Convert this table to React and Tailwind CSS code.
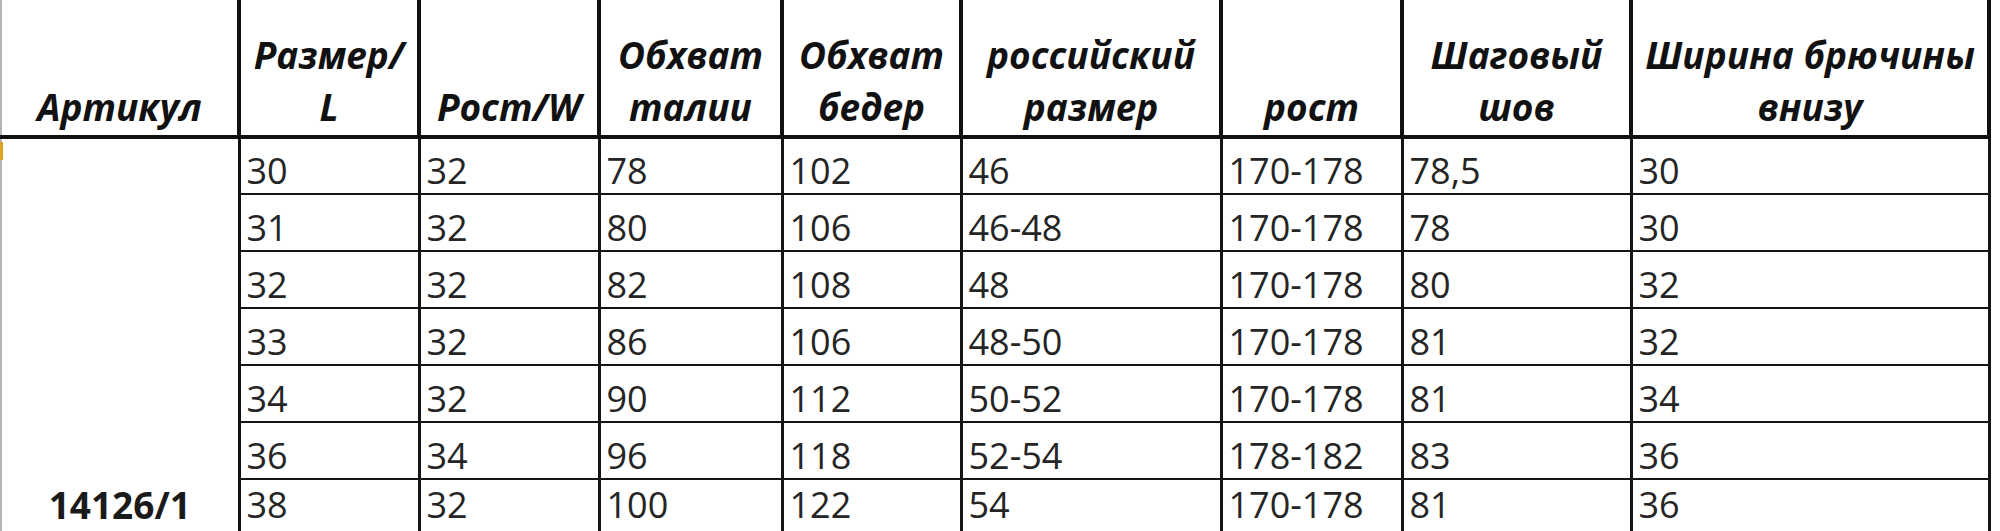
const cols = [
  "w-[238px]",
  "w-[180px]",
  "w-[180px]",
  "w-[183px]",
  "w-[179px]",
  "w-[260px]",
  "w-[181px]",
  "w-[229px]",
  "w-[358px]",
];

const headers = [
  ["Размер/", "L"],
  ["Рост/W"],
  ["Обхват", "талии"],
  ["Обхват", "бедер"],
  ["российский", "размер"],
  ["рост"],
  ["Шаговый", "шов"],
  ["Ширина брючины", "внизу"],
];

const rows = [
  ["30", "32", "78", "102", "46", "170-178", "78,5", "30"],
  ["31", "32", "80", "106", "46-48", "170-178", "78", "30"],
  ["32", "32", "82", "108", "48", "170-178", "80", "32"],
  ["33", "32", "86", "106", "48-50", "170-178", "81", "32"],
  ["34", "32", "90", "112", "50-52", "170-178", "81", "34"],
  ["36", "34", "96", "118", "52-54", "178-182", "83", "36"],
  ["38", "32", "100", "122", "54", "170-178", "81", "36"],
];

export default function App() {
  return (
    <div
      className="relative w-[2000px] h-[531px] overflow-hidden bg-white"
      style={{ fontFamily: '"Open Sans", "Noto Sans", sans-serif' }}
    >
      <table className="table-fixed border-collapse w-[1990px]">
        <colgroup>
          {cols.map((c, i) => (
            <col key={i} className={c} />
          ))}
        </colgroup>
        <thead>
          <tr className="h-[137px]">
            <th className="border-l-2 border-l-[#b5b5b5] border-r-[4px] border-b-[4px] border-[#111] align-bottom text-center font-bold italic text-[37px] leading-[52px] pb-[2px] text-[#111]">
              Артикул
            </th>
            {headers.map((h, i) => (
              <th
                key={i}
                className="border-x-[4px] border-b-[4px] border-[#111] align-bottom text-center font-bold italic text-[37px] leading-[52px] pb-[2px] text-[#111] whitespace-nowrap"
              >
                {h.map((line, j) => (
                  <div key={j}>{line}</div>
                ))}
              </th>
            ))}
          </tr>
        </thead>
        <tbody>
          {rows.map((r, i) => {
            const last = i === rows.length - 1;
            return (
              <tr key={i} className={last ? "h-[54px]" : "h-[57px]"}>
                {i === 0 && (
                  <td
                    rowSpan={7}
                    className="border-l-2 border-l-[#b5b5b5] border-r-[3px] border-r-[#111] align-bottom text-center font-bold text-[37px] leading-[44px] pb-[6px] text-[#1a1a1a]"
                  >
                    14126/1
                  </td>
                )}
                {r.map((v, j) => (
                  <td
                    key={j}
                    className={
                      last
                        ? "border-x-[3px] border-[#151515] align-bottom text-left pl-[6px] pb-[6px] text-[36px] leading-[44px] text-[#252525]"
                        : "border-x-[3px] border-b-2 border-[#151515] align-bottom text-left pl-[6px] pb-0 text-[36px] leading-[44px] text-[#252525]"
                    }
                  >
                    {v}
                  </td>
                ))}
              </tr>
            );
          })}
        </tbody>
      </table>
      <div className="absolute left-0 top-[142px] w-[3px] h-[18px] bg-[#e0a020]" />
    </div>
  );
}
